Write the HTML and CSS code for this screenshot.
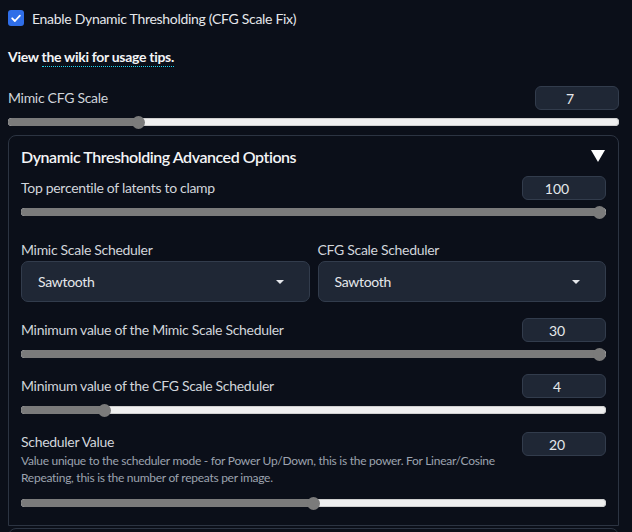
FILE: index.html
```html
<!DOCTYPE html>
<html>
<head>
<meta charset="utf-8">
<link rel="stylesheet" href="styles.css">
</head>
<body>
<div class="page">
  <label class="check-row">
    <span class="checkbox">
      <svg viewBox="0 0 16 16" width="16" height="16"><path d="M4.2 8.3 L6.9 11 L11.9 5.6" fill="none" stroke="#fff" stroke-width="1.8" stroke-linecap="round" stroke-linejoin="round"/></svg>
    </span>
    <span class="check-text">Enable Dynamic Thresholding (CFG Scale Fix)</span>
  </label>

  <p class="note">View <a class="wiki">the wiki for usage tips.</a></p>

  <div class="slider top-slider">
    <div class="slider-head">
      <span class="label">Mimic CFG Scale</span>
      <span class="num">7</span>
    </div>
    <div class="track"><div class="fill" style="width:calc(6.5px + 0.207 * (100% - 13px))"></div><div class="thumb" style="left:calc(6.5px + 0.207 * (100% - 13px))"></div></div>
  </div>

  <div class="accordion">
    <div class="acc-head">
      <span class="acc-title">Dynamic Thresholding Advanced Options</span>
      <span class="caret"></span>
    </div>

    <div class="slider s-top">
      <div class="slider-head">
        <span class="label">Top percentile of latents to clamp</span>
        <span class="num">100</span>
      </div>
      <div class="track"><div class="fill" style="width:calc(6.5px + 1 * (100% - 13px))"></div><div class="thumb" style="left:calc(6.5px + 1 * (100% - 13px))"></div></div>
    </div>

    <div class="dropdowns">
      <div class="dd">
        <span class="label">Mimic Scale Scheduler</span>
        <div class="select"><span>Sawtooth</span><span class="arrow"></span></div>
      </div>
      <div class="dd">
        <span class="label">CFG Scale Scheduler</span>
        <div class="select"><span>Sawtooth</span><span class="arrow"></span></div>
      </div>
    </div>

    <div class="slider s-mm">
      <div class="slider-head">
        <span class="label">Minimum value of the Mimic Scale Scheduler</span>
        <span class="num">30</span>
      </div>
      <div class="track"><div class="fill" style="width:calc(6.5px + 1 * (100% - 13px))"></div><div class="thumb" style="left:calc(6.5px + 1 * (100% - 13px))"></div></div>
    </div>

    <div class="slider s-mc">
      <div class="slider-head">
        <span class="label">Minimum value of the CFG Scale Scheduler</span>
        <span class="num">4</span>
      </div>
      <div class="track"><div class="fill" style="width:calc(6.5px + 0.1345 * (100% - 13px))"></div><div class="thumb" style="left:calc(6.5px + 0.1345 * (100% - 13px))"></div></div>
    </div>

    <div class="slider s-sv">
      <div class="slider-head info-head">
        <div class="label-col">
          <span class="label">Scheduler Value</span>
          <span class="info">Value unique to the scheduler mode - for Power Up/Down, this is the power. For Linear/Cosine Repeating, this is the number of repeats per image.</span>
        </div>
        <span class="num">20</span>
      </div>
      <div class="track"><div class="fill" style="width:calc(6.5px + 0.5 * (100% - 13px))"></div><div class="thumb" style="left:calc(6.5px + 0.5 * (100% - 13px))"></div></div>
    </div>
  </div>
  <div class="next-box"></div>
</div>
</body>
</html>
```

FILE: styles.css
```css
* { box-sizing: border-box; }
html, body { margin: 0; padding: 0; background: #0b0f19; height: 100%; overflow: hidden; }
body { font-family: "Lato", "Noto Sans", sans-serif; color: #d1d5db; font-size: 14px; letter-spacing: -0.3px; }
.page { padding: 10px 13px 0 8px; }

.check-row { display: flex; align-items: center; gap: 8px; height: 16px; }
.checkbox { width: 16px; height: 16px; border-radius: 3px; background: #2f6ee8; display: flex; flex: none; }
.check-text { color: #e5e7eb; font-size: 14px; }

.note { margin: 21px 0 0; font-size: 14px; font-weight: 700; color: #f3f4f6; line-height: 20px; }
.wiki { border-bottom: 1px dotted #22d3ee; padding-bottom: 1px; }

.slider { display: flex; flex-direction: column; }
.slider-head { display: flex; justify-content: space-between; align-items: center; height: 24px; }
.label { color: #d1d5db; font-size: 14px; line-height: 20px; }
.num { width: 84px; height: 24px; border-radius: 6px; background: #1f2735; border: 1px solid #323c4c; color: #e5e7eb; font-size: 14px; display: flex; align-items: center; justify-content: center; padding-right: 14px; flex: none; letter-spacing: 0; }

.track { position: relative; height: 8px; margin-top: 8px; background: #efefef; border-radius: 4px; box-shadow: inset 0 0 0 1px #cfcfcf; }
.fill { position: absolute; left: 0; top: 0; bottom: 0; background: #7b7b7b; border-radius: 4px; }
.thumb { position: absolute; top: 50%; width: 13px; height: 13px; margin: -6.5px 0 0 -6.5px; border-radius: 50%; background: #7b7b7b; }

.top-slider { margin-top: 19px; }
.top-slider .track { margin-top: 8px; }

.accordion { margin-top: 9px; border: 1px solid #2c3442; border-radius: 8px 8px 0 0; padding: 10px 12px 15px 12px; height: 391px; }
.acc-head { display: flex; justify-content: space-between; align-items: center; height: 20px; }
.acc-title { color: #f3f4f6; font-size: 16px; font-weight: 600; letter-spacing: -0.45px; }
.caret { width: 0; height: 0; border-left: 7px solid transparent; border-right: 7px solid transparent; border-top: 12px solid #fff; margin-right: 1px; }

.s-top { margin-top: 10px; }

.dropdowns { display: grid; grid-template-columns: 1fr 1fr; gap: 8px; margin-top: 24px; }
.dd { display: flex; flex-direction: column; gap: 1px; }
.select { height: 41px; border-radius: 7px; background: #1f2735; border: 1px solid #323c4c; display: flex; align-items: center; justify-content: space-between; padding: 0 25px 0 16px; color: #e5e7eb; font-size: 14px; }
.arrow { width: 0; height: 0; border-left: 4px solid transparent; border-right: 4px solid transparent; border-top: 4px solid #e5e7eb; }

.s-mm { margin-top: 16px; }
.s-mc { margin-top: 16px; }
.s-sv { margin-top: 18px; }
.info-head { height: auto; align-items: flex-start; }
.label-col { display: flex; flex-direction: column; width: 490px; }
.info { font-size: 12px; color: #9ca3af; line-height: 17px; letter-spacing: -0.27px; }
.s-sv .track { margin-top: 13px; }

.next-box { margin-top: 2px; height: 20px; border: 1px solid #2c3442; border-radius: 8px; }
```
